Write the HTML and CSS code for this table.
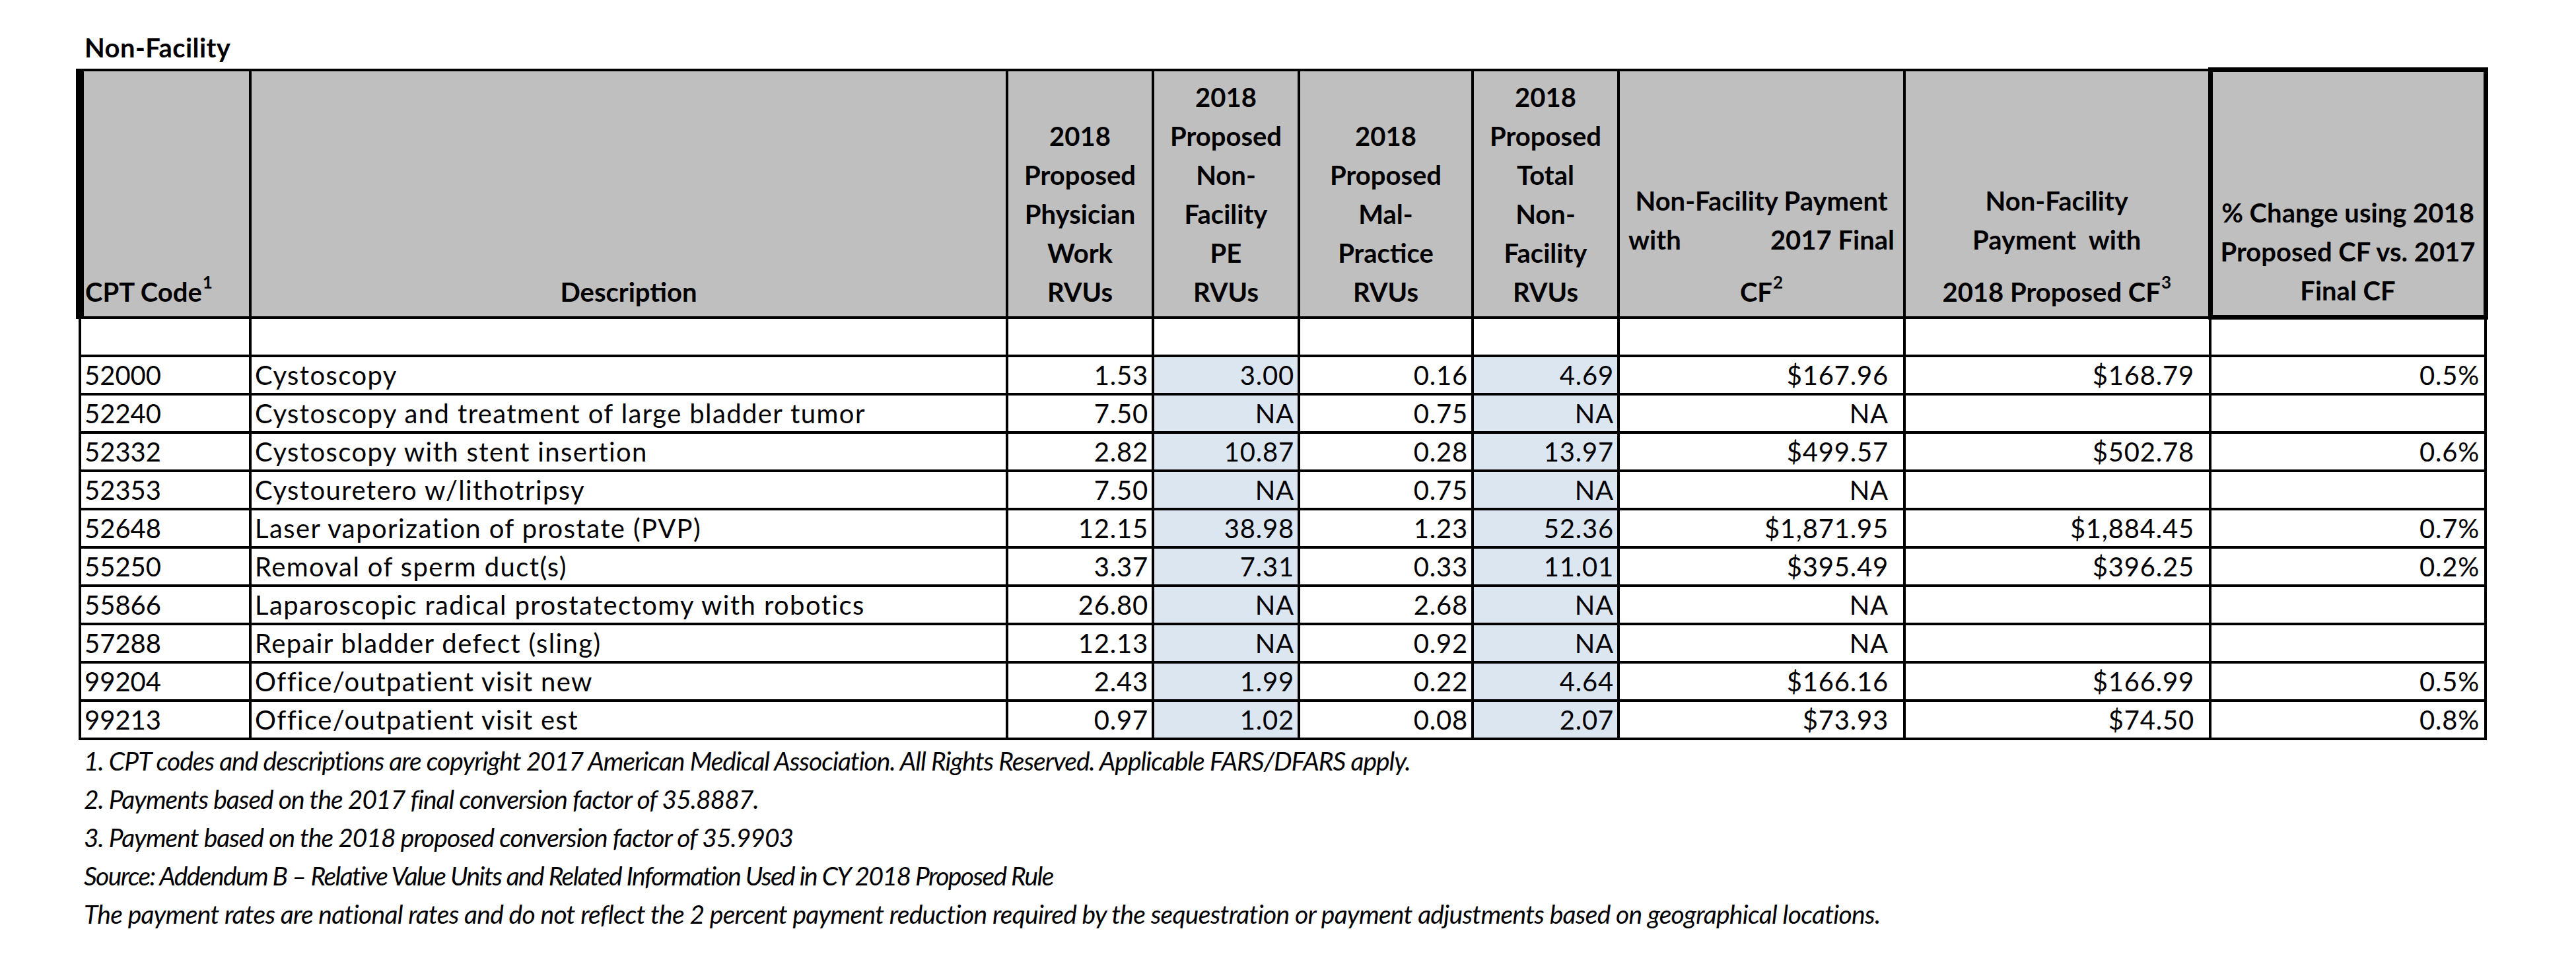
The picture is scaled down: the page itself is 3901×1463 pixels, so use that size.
FILE: index.html
```html
<!DOCTYPE html>
<html lang="en">
<head>
<meta charset="utf-8">
<title>Non-Facility</title>
<link rel="stylesheet" href="styles.css">
</head>
<body>
<div class="page">
  <div class="title">Non-Facility</div>
  <table class="rvu">
    <colgroup>
      <col class="c-code">
      <col class="c-desc">
      <col class="c-work">
      <col class="c-pe">
      <col class="c-mal">
      <col class="c-total">
      <col class="c-pay17">
      <col class="c-pay18">
      <col class="c-pct">
    </colgroup>
    <thead>
      <tr class="head">
        <th class="h-code">CPT Code<sup>1</sup></th>
        <th>Description</th>
        <th>2018<br>Proposed<br>Physician<br>Work<br>RVUs</th>
        <th>2018<br>Proposed<br>Non-<br>Facility<br>PE<br>RVUs</th>
        <th>2018<br>Proposed<br>Mal-<br>Practice<br>RVUs</th>
        <th>2018<br>Proposed<br>Total<br>Non-<br>Facility<br>RVUs</th>
        <th class="h-pay17">
          <div class="ln">Non-Facility Payment</div>
          <div class="ln spread"><span>with</span><span>2017 Final</span></div>
          <div class="ln sup-line">CF<sup>2</sup></div>
        </th>
        <th class="h-pay18">
          <div class="ln">Non-Facility</div>
          <div class="ln keep">Payment  with</div>
          <div class="ln sup-line">2018 Proposed CF<sup>3</sup></div>
        </th>
        <th class="h-pct">% Change using 2018<br>Proposed CF vs. 2017<br>Final CF</th>
      </tr>
    </thead>
    <tbody>
      <tr class="blank">
        <td>&nbsp;</td><td></td><td></td><td></td><td></td><td></td><td></td><td></td><td></td>
      </tr>
      <tr>
        <td class="code">52000</td><td class="desc">Cystoscopy</td>
        <td class="num">1.53</td><td class="num hl">3.00</td><td class="num">0.16</td><td class="num hl">4.69</td>
        <td class="num pay">$167.96</td><td class="num pay">$168.79</td><td class="num pct">0.5%</td>
      </tr>
      <tr>
        <td class="code">52240</td><td class="desc">Cystoscopy and treatment of large bladder tumor</td>
        <td class="num">7.50</td><td class="num hl">NA</td><td class="num">0.75</td><td class="num hl">NA</td>
        <td class="num pay">NA</td><td class="num pay"></td><td class="num pct"></td>
      </tr>
      <tr>
        <td class="code">52332</td><td class="desc">Cystoscopy with stent insertion</td>
        <td class="num">2.82</td><td class="num hl">10.87</td><td class="num">0.28</td><td class="num hl">13.97</td>
        <td class="num pay">$499.57</td><td class="num pay">$502.78</td><td class="num pct">0.6%</td>
      </tr>
      <tr>
        <td class="code">52353</td><td class="desc">Cystouretero w/lithotripsy</td>
        <td class="num">7.50</td><td class="num hl">NA</td><td class="num">0.75</td><td class="num hl">NA</td>
        <td class="num pay">NA</td><td class="num pay"></td><td class="num pct"></td>
      </tr>
      <tr>
        <td class="code">52648</td><td class="desc">Laser vaporization of prostate (PVP)</td>
        <td class="num">12.15</td><td class="num hl">38.98</td><td class="num">1.23</td><td class="num hl">52.36</td>
        <td class="num pay">$1,871.95</td><td class="num pay">$1,884.45</td><td class="num pct">0.7%</td>
      </tr>
      <tr>
        <td class="code">55250</td><td class="desc">Removal of sperm duct(s)</td>
        <td class="num">3.37</td><td class="num hl">7.31</td><td class="num">0.33</td><td class="num hl">11.01</td>
        <td class="num pay">$395.49</td><td class="num pay">$396.25</td><td class="num pct">0.2%</td>
      </tr>
      <tr>
        <td class="code">55866</td><td class="desc">Laparoscopic radical prostatectomy with robotics</td>
        <td class="num">26.80</td><td class="num hl">NA</td><td class="num">2.68</td><td class="num hl">NA</td>
        <td class="num pay">NA</td><td class="num pay"></td><td class="num pct"></td>
      </tr>
      <tr>
        <td class="code">57288</td><td class="desc">Repair bladder defect (sling)</td>
        <td class="num">12.13</td><td class="num hl">NA</td><td class="num">0.92</td><td class="num hl">NA</td>
        <td class="num pay">NA</td><td class="num pay"></td><td class="num pct"></td>
      </tr>
      <tr>
        <td class="code">99204</td><td class="desc">Office/outpatient visit new</td>
        <td class="num">2.43</td><td class="num hl">1.99</td><td class="num">0.22</td><td class="num hl">4.64</td>
        <td class="num pay">$166.16</td><td class="num pay">$166.99</td><td class="num pct">0.5%</td>
      </tr>
      <tr>
        <td class="code">99213</td><td class="desc">Office/outpatient visit est</td>
        <td class="num">0.97</td><td class="num hl">1.02</td><td class="num">0.08</td><td class="num hl">2.07</td>
        <td class="num pay">$73.93</td><td class="num pay">$74.50</td><td class="num pct">0.8%</td>
      </tr>
    </tbody>
  </table>
  <div class="notes">
    <p>1. CPT codes and descriptions are copyright 2017 American Medical Association. All Rights Reserved. Applicable FARS/DFARS apply.</p>
    <p>2. Payments based on the 2017 final conversion factor of 35.8887.</p>
    <p>3. Payment based on the 2018 proposed conversion factor of 35.9903</p>
    <p class="note-source">Source: Addendum B – Relative Value Units and Related Information Used in CY 2018 Proposed Rule</p>
    <p class="note-wide">The payment rates are national rates and do not reflect the 2 percent payment reduction required by the sequestration or payment adjustments based on geographical locations.</p>
  </div>
</div>
</body>
</html>
```

FILE: styles.css
```css
html, body {
  margin: 0;
  padding: 0;
  background: #ffffff;
}

body {
  font-family: "Lato", "Open Sans", sans-serif;
  font-size: 40px;
  color: #000000;
}

.page {
  padding: 48px 0 0 115px;
}

.title {
  font-weight: 700;
  line-height: 48px;
  margin: 0 0 6px 13px;
  letter-spacing: 0.4px;
}

.rvu {
  border-collapse: collapse;
  table-layout: fixed;
}

.c-code  { width: 258px; }
.c-desc  { width: 1146px; }
.c-work  { width: 221px; }
.c-pe    { width: 221px; }
.c-mal   { width: 263px; }
.c-total { width: 221px; }
.c-pay17 { width: 433px; }
.c-pay18 { width: 463px; }
.c-pct   { width: 417px; }

.rvu th {
  background: #bfbfbf;
  border: 4px solid #000000;
  font-weight: 700;
  text-align: center;
  vertical-align: bottom;
  line-height: 59px;
  padding: 0 2px 7px;
  white-space: nowrap;
}

.head {
  height: 375px;
}

.rvu th.h-code {
  border-left-width: 12px;
  text-align: left;
}

.rvu th.h-pct {
  border-width: 7px;
}

.ln {
  display: block;
}

.spread {
  display: flex;
  justify-content: space-between;
  margin: 0 11px;
}

.keep {
  white-space: pre;
}

.sup-line {
  margin-top: 20px;
}

sup {
  font-size: 26px;
  line-height: 0;
  vertical-align: 20px;
  margin-left: 1px;
}

.rvu td {
  border: 4px solid #000000;
  padding: 0 5px;
  line-height: 54px;
  vertical-align: bottom;
  white-space: nowrap;
  overflow: hidden;
}

.rvu td.desc {
  letter-spacing: 1.4px;
}

.rvu td.num {
  text-align: right;
  letter-spacing: 0.8px;
}

.rvu td.hl {
  background: #dce6f1;
}

.rvu td.pay {
  padding-right: 22px;
}

.rvu td.pct {
  padding-right: 7px;
}

.notes {
  margin: 2px 0 0 12px;
  font-style: italic;
  font-size: 39px;
  letter-spacing: -1px;
  line-height: 58px;
}

.notes p {
  margin: 0;
  white-space: nowrap;
}

.notes .note-source {
  letter-spacing: -1.6px;
}

.notes .note-wide {
  letter-spacing: -0.7px;
}
```
